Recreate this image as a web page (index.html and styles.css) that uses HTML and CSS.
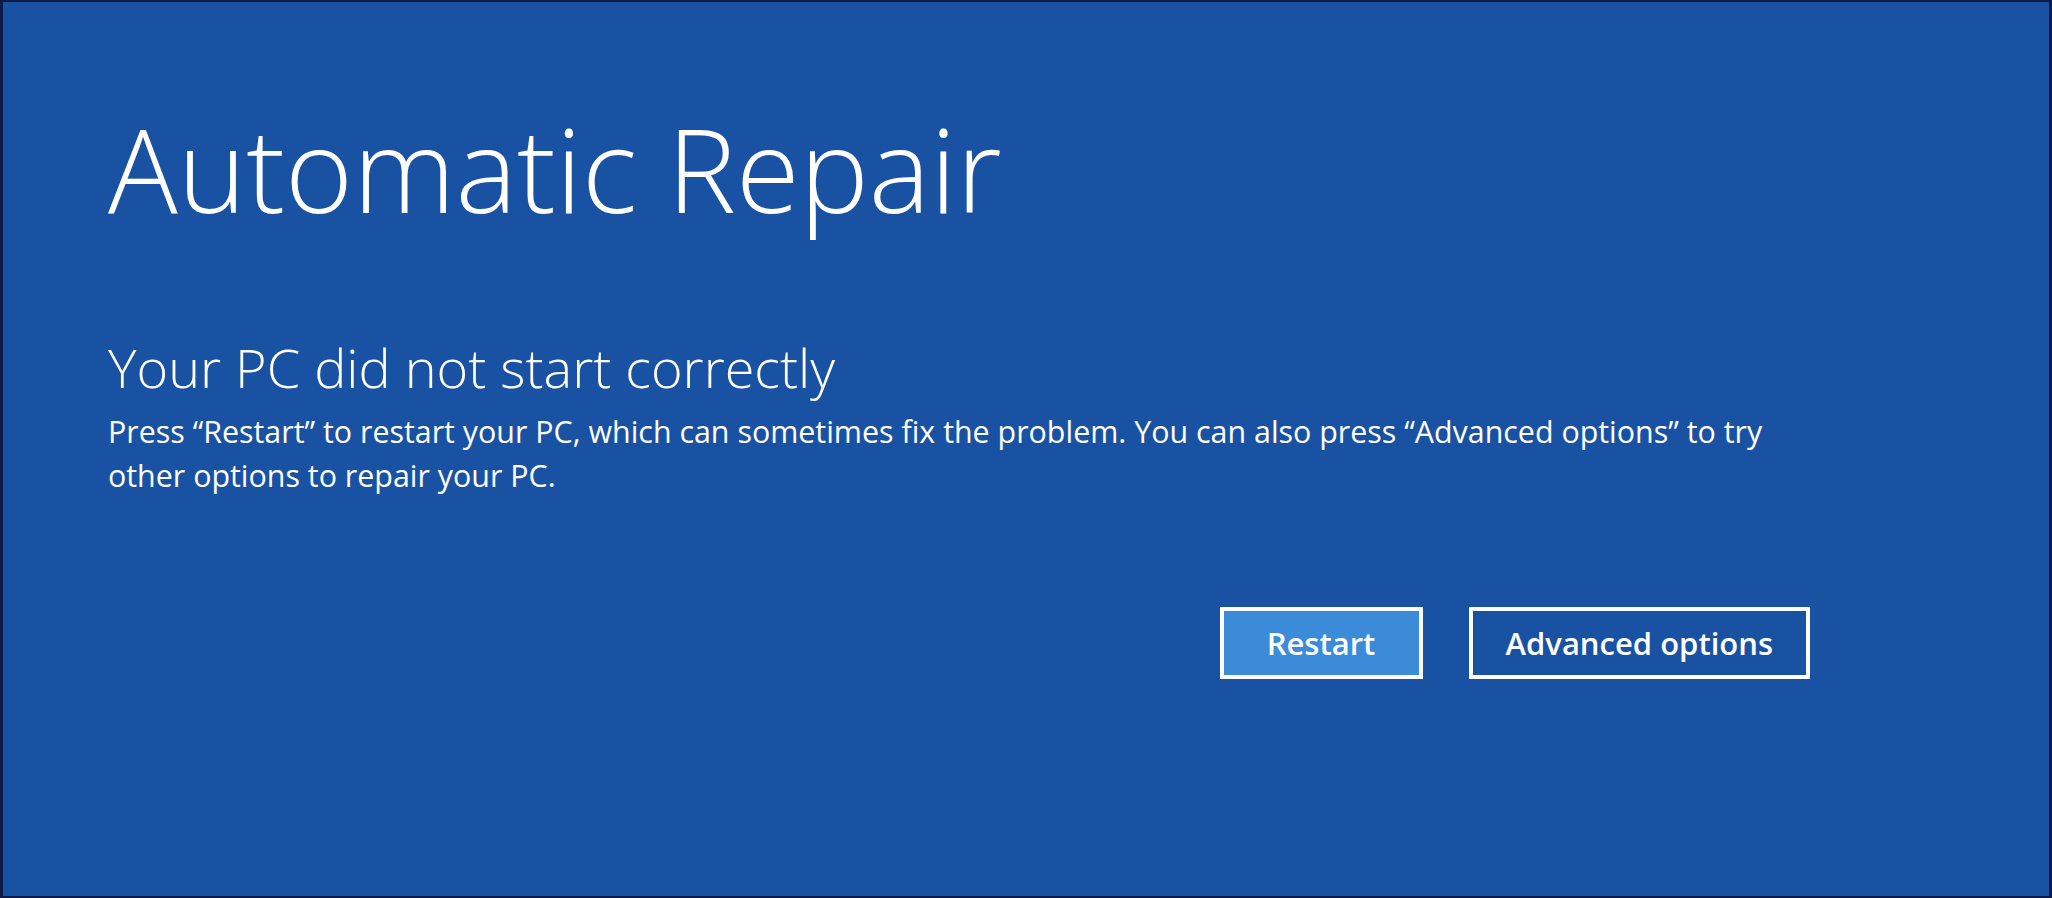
FILE: index.html
```html
<!DOCTYPE html>
<html>
<head>
	<title>Automatic Repair</title>
	<meta charset="UTF-8">
	<link rel="stylesheet" href="styles.css">
</head>
<body>
	<div id="screen">
		<div class="content">
			<h1 class="title">Automatic Repair</h1>
			<h2 class="subtitle">Your PC did not start correctly</h2>
			<p class="message">Press “Restart” to restart your PC, which can sometimes fix the problem. You can also press “Advanced options” to try other options to repair your PC.</p>
			<div class="actions">
				<button class="btn btn-primary">Restart</button>
				<button class="btn">Advanced options</button>
			</div>
		</div>
	</div>
</body>
</html>
```

FILE: styles.css
```css
*{
	margin: 0;
	padding: 0;
	box-sizing: border-box;
}
html,body{
	height: 100%;
}
body{
	background: #0b1a47;
	font-family: "Open Sans", "Noto Sans", sans-serif;
	color: #fff;
}
#screen{
	height: 898px;
	border: 2px solid #0b1a47;
	border-left-width: 3px;
	border-right-width: 3px;
	background: #1a52a3;
	padding: 108px 0 0 105px;
}
.content{
	width: 1702px;
}
.title{
	font-size: 116px;
	font-weight: 300;
	line-height: 116px;
	white-space: nowrap;
}
.subtitle{
	margin-top: 114px;
	font-size: 54px;
	font-weight: 300;
	line-height: 54px;
	white-space: nowrap;
}
.message{
	margin-top: 16px;
	font-size: 30.4px;
	line-height: 44px;
}
.actions{
	display: flex;
	justify-content: flex-end;
	gap: 46px;
	margin-top: 109px;
}
.btn{
	height: 72px;
	min-width: 203px;
	padding: 0 33px;
	border: 4px solid #fff;
	background: #1a52a3;
	color: #fff;
	font-family: "Open Sans", "Noto Sans", sans-serif;
	font-size: 31px;
	font-weight: 600;
	cursor: pointer;
}
.btn-primary{
	background: #3b8bd9;
}
```
